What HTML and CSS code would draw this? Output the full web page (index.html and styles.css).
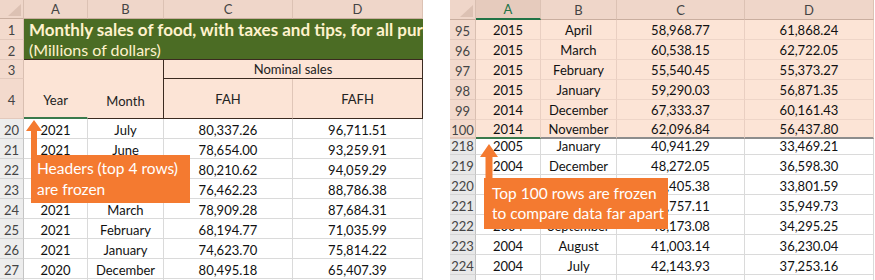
FILE: index.html
```html
<!DOCTYPE html>
<html lang="en">
<head>
    <meta charset="UTF-8">
    <title>Freeze panes</title>
    <link rel="stylesheet" href="styles.css">
</head>
<body>

<div class="page">

    <!-- Left sheet: headers frozen -->
    <div class="sheet sheet-left">
        <div class="grid">
            <div class="corner"></div>
            <div class="colhd">A</div>
            <div class="colhd">B</div>
            <div class="colhd">C</div>
            <div class="colhd">D</div>

            <div class="rowhd tint">1</div>
            <div class="title">Monthly sales of food, with taxes and tips, for all purchasers</div>
            <div class="rowhd tint">2</div>
            <div class="subtitle">(Millions of dollars)</div>

            <div class="rowhd tint">3</div>
            <div class="th th-year">Year</div>
            <div class="th th-month">Month</div>
            <div class="th th-nominal">Nominal sales</div>
            <div class="rowhd tint">4</div>
            <div class="th th-fah">FAH</div>
            <div class="th th-fafh">FAFH</div>

            <div class="rowhd">20</div><div class="cell">2021</div><div class="cell">July</div><div class="cell">80,337.26</div><div class="cell">96,711.51</div>
            <div class="rowhd">21</div><div class="cell">2021</div><div class="cell">June</div><div class="cell">78,654.00</div><div class="cell">93,259.91</div>
            <div class="rowhd">22</div><div class="cell"></div><div class="cell"></div><div class="cell">80,210.62</div><div class="cell">94,059.29</div>
            <div class="rowhd">23</div><div class="cell"></div><div class="cell"></div><div class="cell">76,462.23</div><div class="cell">88,786.38</div>
            <div class="rowhd">24</div><div class="cell">2021</div><div class="cell">March</div><div class="cell">78,909.28</div><div class="cell">87,684.31</div>
            <div class="rowhd">25</div><div class="cell">2021</div><div class="cell">February</div><div class="cell">68,194.77</div><div class="cell">71,035.99</div>
            <div class="rowhd">26</div><div class="cell">2021</div><div class="cell">January</div><div class="cell">74,623.70</div><div class="cell">75,814.22</div>
            <div class="rowhd">27</div><div class="cell">2020</div><div class="cell">December</div><div class="cell">80,495.18</div><div class="cell">65,407.39</div>
            <div class="rowhd"></div><div class="cell"></div><div class="cell"></div><div class="cell"></div><div class="cell"></div>
        </div>

        <svg class="arrow arrow-left" width="18" height="36" viewBox="0 0 18 36">
            <polygon points="9,0 17,11 12,11 12,36 6,36 6,11 1,11" fill="#f47a30"/>
        </svg>
        <div class="callout callout-left">Headers (top 4 rows)<br>are frozen</div>
    </div>

    <!-- Right sheet: top 100 rows frozen -->
    <div class="sheet sheet-right">
        <div class="grid">
            <div class="corner"></div>
            <div class="colhd sel">A</div>
            <div class="colhd">B</div>
            <div class="colhd">C</div>
            <div class="colhd">D</div>

            <div class="rowhd tint">95</div><div class="fz">2015</div><div class="fz">April</div><div class="fz">58,968.77</div><div class="fz">61,868.24</div>
            <div class="rowhd tint">96</div><div class="fz">2015</div><div class="fz">March</div><div class="fz">60,538.15</div><div class="fz">62,722.05</div>
            <div class="rowhd tint">97</div><div class="fz">2015</div><div class="fz">February</div><div class="fz">55,540.45</div><div class="fz">55,373.27</div>
            <div class="rowhd tint">98</div><div class="fz">2015</div><div class="fz">January</div><div class="fz">59,290.03</div><div class="fz">56,871.35</div>
            <div class="rowhd tint">99</div><div class="fz">2014</div><div class="fz">December</div><div class="fz">67,333.37</div><div class="fz">60,161.43</div>
            <div class="rowhd tint last">100</div><div class="fz last sel">2014</div><div class="fz last">November</div><div class="fz last">62,096.84</div><div class="fz last">56,437.80</div>

            <div class="rowhd top">218</div><div class="cell top">2005</div><div class="cell top">January</div><div class="cell top">40,941.29</div><div class="cell top">33,469.21</div>
            <div class="rowhd">219</div><div class="cell">2004</div><div class="cell">December</div><div class="cell">48,272.05</div><div class="cell">36,598.30</div>
            <div class="rowhd">220</div><div class="cell"></div><div class="cell"></div><div class="cell">43,405.38</div><div class="cell">33,801.59</div>
            <div class="rowhd">221</div><div class="cell"></div><div class="cell"></div><div class="cell">42,757.11</div><div class="cell">35,949.73</div>
            <div class="rowhd">222</div><div class="cell">2004</div><div class="cell">September</div><div class="cell">40,173.08</div><div class="cell">34,295.25</div>
            <div class="rowhd">223</div><div class="cell">2004</div><div class="cell">August</div><div class="cell">41,003.14</div><div class="cell">36,230.04</div>
            <div class="rowhd">224</div><div class="cell">2004</div><div class="cell">July</div><div class="cell">42,143.93</div><div class="cell">37,253.16</div>
            <div class="rowhd"></div><div class="cell"></div><div class="cell"></div><div class="cell"></div><div class="cell"></div>
        </div>

        <svg class="arrow arrow-right" width="20" height="35" viewBox="0 0 20 35">
            <polygon points="10,0 19,13 13.5,13 13.5,35 6.5,35 6.5,13 1,13" fill="#f47a30"/>
        </svg>
        <div class="callout callout-right">Top 100 rows are frozen<br>to compare data far apart</div>
    </div>

</div>

</body>
</html>
```

FILE: styles.css
```css
body {
    margin: 0;
    background-color: white;
    font-family: Lato, "Open Sans", sans-serif;
}
.page {
    display: flex;
    gap: 27px;
    height: 280px;
    overflow: hidden;
}
.sheet {
    position: relative;
    height: 280px;
    overflow: hidden;
}
.sheet-left {
    width: 423px;
}
.sheet-right {
    width: 425px;
}
.grid {
    display: grid;
    font-size: 13px;
    color: #111;
}
.sheet-left .grid {
    grid-template-columns: 24px 64px 76px 129px 130px;
    grid-template-rows: 19px 21px 20px 19px 40px repeat(8, 20px) 20px;
}
.sheet-right .grid {
    grid-template-columns: 26px 65px 76px 128px 129px;
    grid-template-rows: 20px repeat(5, 20px) 19px 16px repeat(6, 20px) 20px;
}

/* every cell */
.grid > div {
    box-sizing: border-box;
    display: flex;
    align-items: center;
    justify-content: center;
    white-space: nowrap;
    overflow: hidden;
    border-right: 1px solid #dadada;
    border-bottom: 1px solid #dadada;
}

/* sheet headers */
.corner {
    position: relative;
    background-color: #efd6c9;
    border-right-color: #d9bfb1 !important;
    border-bottom-color: #c9ae9f !important;
}
.corner::after {
    content: "";
    position: absolute;
    right: 2px;
    bottom: 2px;
    width: 13px;
    height: 12px;
    background-color: #dcc1b3;
    clip-path: polygon(100% 0, 100% 100%, 0 100%);
}
.colhd {
    background-color: #efd6c9;
    color: #444;
    border-right-color: #dcc2b4 !important;
    border-bottom-color: #c9ae9f !important;
}
.colhd.sel {
    background-color: #e6cbbd;
    color: #217346;
    border-bottom: 2px solid #217346 !important;
}
.rowhd {
    background-color: #ededed;
    color: #444;
    border-right-color: #c4c4c4 !important;
    border-bottom-color: #d4d4d4 !important;
    padding-top: 2px;
}
.rowhd.tint {
    background-color: #f3dacd;
    border-right-color: #d9bfb1 !important;
    border-bottom-color: #e3c9bc !important;
}
.sheet-right .rowhd {
    background-color: #e8e8e8;
}
.sheet-right .rowhd.tint {
    background-color: #f3dacd;
}
.cell {
    background-color: white;
    padding-top: 2px;
}

/* title rows */
.title, .subtitle {
    grid-column: span 4;
    justify-content: flex-start !important;
    padding-left: 5px;
    background-color: #4b6c24;
    color: #fff2cc;
    font-size: 16px;
    border-right: none !important;
    border-bottom-color: #4b6c24 !important;
}
.title {
    font-weight: bold;
    font-size: 17px;
}
.subtitle {
    border-bottom-color: #3b2a20 !important;
}

/* table header */
.th {
    background-color: #fce4d6;
    color: #222;
    border-color: #fce4d6 !important;
}
.th-year, .th-month {
    grid-row: span 2;
    align-items: flex-end !important;
    padding-bottom: 9px;
    border-bottom: 1px solid #3b2a20 !important;
}
.th-year {
    border-bottom: 2px solid #3a7a4c !important;
}
.th-month {
    border-right: 1px solid #3b2a20 !important;
}
.th-nominal {
    grid-column: span 2;
    border-right: 1px solid #3b2a20 !important;
    border-bottom: 1px solid #3b2a20 !important;
}
.th-fah, .th-fafh {
    border-bottom: 1px solid #3b2a20 !important;
}
.th-fah {
    border-right: 1px solid #e0c6b8 !important;
}
.th-fafh {
    border-right: 1px solid #3b2a20 !important;
}

/* frozen rows in the right sheet */
.fz {
    background-color: #fce4d6;
    border-right-color: #e9cfc2 !important;
    border-bottom-color: #eed5c8 !important;
}
.last {
    border-bottom: 2px solid #8d8d8d !important;
}
.fz.last.sel {
    border-bottom-color: #3a7a4c !important;
}
.top {
    padding-top: 0 !important;
    padding-bottom: 1px;
}

/* callouts */
.arrow {
    position: absolute;
    display: block;
}
.arrow-left {
    left: 25px;
    top: 120px;
}
.arrow-right {
    left: 29px;
    top: 144px;
}
.callout {
    position: absolute;
    box-sizing: border-box;
    background-color: #f47a30;
    color: white;
    font-size: 15.5px;
}
.callout-left {
    left: 31px;
    top: 155px;
    width: 159px;
    height: 48px;
    padding: 3px 0 0 6px;
    line-height: 21px;
}
.callout-right {
    left: 34px;
    top: 178px;
    width: 184px;
    height: 51px;
    padding: 5px 0 0 8px;
    line-height: 20px;
}
```
